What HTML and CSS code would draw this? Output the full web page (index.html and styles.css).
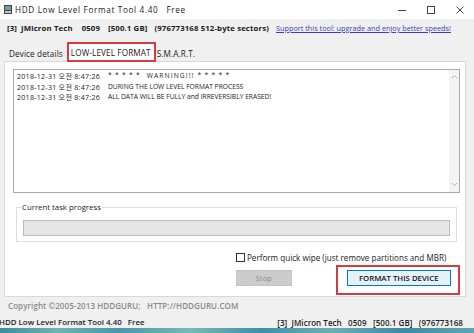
FILE: index.html
```html
<!DOCTYPE html>
<html>
<head>
<meta charset="utf-8">
<link rel="stylesheet" href="styles.css">
</head>
<body>
<div class="window">
  <div class="titlebar">
    <svg class="appicon" width="8" height="9" viewBox="0 0 8 9">
      <rect x="0" y="0" width="8" height="9" fill="#3b4a48"/>
      <rect x="1" y="1" width="6" height="4" fill="#7d9a8e"/>
      <rect x="1" y="6" width="6" height="2" fill="#b8c8c0"/>
    </svg>
    <span class="title">HDD Low Level Format Tool 4.40</span>
    <span class="title free">Free</span>
    <div class="controls">
      <svg width="10" height="10" viewBox="0 0 10 10"><line x1="1" y1="5.5" x2="9" y2="5.5" stroke="#444" stroke-width="1"/></svg>
      <svg width="10" height="10" viewBox="0 0 10 10"><rect x="1.5" y="1.5" width="7" height="7" fill="none" stroke="#444" stroke-width="1"/></svg>
      <svg width="10" height="10" viewBox="0 0 10 10"><path d="M1.5 1.5 L8.5 8.5 M8.5 1.5 L1.5 8.5" stroke="#444" stroke-width="1"/></svg>
    </div>
  </div>

  <div class="info">
    <div class="devinfo">
      <span>[3]</span>
      <span class="g4">JMicron Tech</span>
      <span class="g9">0509</span>
      <span class="g8">[500.1 GB]</span>
      <span class="g7">(976773168 512-byte sectors)</span>
    </div>
    <a class="support" href="#">Support this tool: upgrade and enjoy better speeds!</a>
  </div>

  <div class="tabs">
    <div class="tab first">Device details</div>
    <div class="tab active">LOW-LEVEL FORMAT</div>
    <div class="tab last">S.M.A.R.T.</div>
  </div>

  <div class="panel">
    <div class="log">
      <div class="lines">
        <div class="line"><span class="ts">2018-12-31 오전 8:47:26</span><span class="msg warn"><span class="stars">* * * * *</span><span class="warnword">WARNING!!!</span><span class="stars after">* * * * *</span></span></div>
        <div class="line"><span class="ts">2018-12-31 오전 8:47:26</span><span class="msg">DURING THE LOW LEVEL FORMAT PROCESS</span></div>
        <div class="line"><span class="ts">2018-12-31 오전 8:47:26</span><span class="msg">ALL DATA WILL BE FULLY and IRREVERSIBLY ERASED!</span></div>
      </div>
      <div class="scrollbar">
        <svg width="7" height="5" viewBox="0 0 7 5"><path d="M1 4 L3.5 1.5 L6 4" fill="none" stroke="#b5b5b5" stroke-width="1"/></svg>
        <svg width="7" height="5" viewBox="0 0 7 5"><path d="M1 1 L3.5 3.5 L6 1" fill="none" stroke="#b5b5b5" stroke-width="1"/></svg>
      </div>
    </div>

    <fieldset class="group">
      <legend>Current task progress</legend>
      <div class="progress"></div>
    </fieldset>

    <div class="options">
      <span class="checkbox"></span>
      <span class="optlabel">Perform quick wipe (just remove partitions and MBR)</span>
    </div>

    <div class="actions">
      <div class="btn stop">Stop</div>
      <div class="highlight">
        <div class="btn format">FORMAT THIS DEVICE</div>
      </div>
    </div>
  </div>

  <div class="copyright">Copyright ©2005-2013 HDDGURU;&nbsp;&nbsp; HTTP://HDDGURU.COM</div>

  <div class="statusbar">
    <span class="left">HDD Low Level Format Tool 4.40 &nbsp; Free</span>
    <span class="right">[3]&nbsp; JMicron Tech &nbsp; 0509 &nbsp; [500.1 GB] &nbsp; (976773168</span>
  </div>
  <div class="desktop"></div>
</div>
</body>
</html>
```

FILE: styles.css
```css
* { box-sizing: border-box; }
html, body { margin: 0; padding: 0; }
body {
  width: 474px;
  height: 333px;
  overflow: hidden;
  background: #f0f0f0;
  font-family: "Open Sans", "Noto Sans CJK KR", sans-serif;
  font-size: 7.8px;
  color: #1b1b1b;
}
.window {
  display: flex;
  flex-direction: column;
  width: 474px;
  height: 333px;
}
.titlebar {
  height: 19px;
  background: #ffffff;
  display: flex;
  align-items: center;
  padding-left: 4px;
}
.appicon { margin-right: 3px; }
.title {
  font-size: 8.2px;
  letter-spacing: 0.65px;
  color: #222;
  white-space: nowrap;
}
.free { margin-left: 8px; }
.controls {
  margin-left: auto;
  display: flex;
  gap: 19px;
  padding-right: 9px;
}
.info {
  height: 18px;
  display: flex;
  align-items: center;
  padding-left: 7px;
}
.devinfo {
  width: 262px;
  flex: none;
  display: flex;
  font-weight: 700;
  font-size: 7.8px;
  letter-spacing: 0.13px;
  white-space: nowrap;
  color: #1a1a1a;
}
.g4 { margin-left: 4px; }
.g9 { margin-left: 9px; }
.g8 { margin-left: 8px; }
.g7 { margin-left: 7px; }
.support {
  margin-left: 7px;
  color: #3c3cc4;
  text-decoration: underline;
  white-space: nowrap;
  font-size: 7.3px;
}
.tabs {
  height: 24px;
  display: flex;
  align-items: flex-end;
  padding-left: 5px;
}
.tab {
  height: 17px;
  padding-top: 2px;
  line-height: 15px;
  white-space: nowrap;
  font-size: 8.2px;
  letter-spacing: 0.1px;
  color: #222;
}
.tab.first { padding-left: 4px; padding-right: 4px; }
.tab.last { padding-left: 1px; }
.tab.active {
  height: 20px;
  line-height: 14px;
  background: #fff;
  border: 2px solid #d63a44;
  padding: 2px 3px 0 2px;
  margin-bottom: -1px;
  position: relative;
  z-index: 1;
}
.panel {
  margin: 0 8px 0 4px;
  background: #ffffff;
  border: 1px solid #d8d8d8;
  height: 236px;
  display: flex;
  flex-direction: column;
  padding: 7px 5px 0 8px;
}
.log {
  height: 124px;
  border: 1px solid #a9a9a9;
  display: flex;
  background: #fff;
}
.lines {
  flex: 1;
  padding: 1px 0 0 3px;
}
.line {
  height: 10.6px;
  line-height: 10.6px;
  white-space: nowrap;
  color: #1a1a1a;
  display: flex;
}
.ts {
  width: 91px;
  font-size: 7.1px;
  letter-spacing: 0.25px;
}
.msg { font-size: 6.7px; }
.msg.warn { display: flex; }
.stars { margin-right: 7px; word-spacing: 1.6px; }
.warnword { letter-spacing: 1.1px; }
.stars.after { margin-right: 0; margin-left: 3px; }
.scrollbar {
  width: 10px;
  background: #f3f3f3;
  display: flex;
  flex-direction: column;
  justify-content: space-between;
  align-items: center;
  padding: 4px 0 5px;
}
.group {
  margin: 10px 3px 0 3px;
  border: 1px solid #dedede;
  padding: 8px 6px 5px 6px;
  height: 39px;
}
.group legend {
  padding: 0 1px;
  margin-left: -2px;
  font-size: 7.8px;
  color: #222;
  line-height: 9px;
}
.progress {
  height: 16px;
  background: #e6e6e6;
  border: 1px solid #bcbcbc;
}
.options {
  margin-top: 10px;
  display: flex;
  align-items: center;
  padding-left: 223px;
  height: 11px;
}
.checkbox {
  width: 9px;
  height: 9px;
  border: 1px solid #333;
  background: #fff;
  margin-right: 2px;
  flex: none;
}
.optlabel {
  font-size: 8.1px;
  white-space: nowrap;
  color: #1a1a1a;
}
.actions {
  display: flex;
  align-items: flex-start;
  padding-left: 223px;
  margin-top: 2px;
}
.btn {
  height: 16px;
  line-height: 14px;
  text-align: center;
  font-size: 7.8px;
  white-space: nowrap;
}
.stop {
  margin-top: 5px;
  width: 57px;
  background: #cccccc;
  border: 1px solid #c4c4c4;
  color: #8c8c8c;
}
.highlight {
  margin-left: 44px;
  width: 127px;
  height: 30px;
  border: 2px solid #d63a44;
  padding: 3px 0 0 9px;
}
.format {
  width: 104px;
  background: #e5f1fb;
  border: 1px solid #0078d7;
  color: #111;
  font-weight: 600;
}
.copyright {
  height: 19px;
  line-height: 18px;
  padding-left: 8px;
  color: #8a8a8a;
  font-weight: 600;
  font-size: 8px;
  letter-spacing: 0.08px;
  white-space: nowrap;
}
.statusbar {
  height: 12px;
  display: flex;
  align-items: center;
  font-weight: 600;
  white-space: nowrap;
  color: #1e1e1e;
}
.statusbar .left { font-size: 7.9px; margin-left: -1px; }
.statusbar .right { margin-left: auto; margin-right: 11px; font-size: 8px; letter-spacing: 0.05px; }
.desktop {
  flex: 1;
  background: linear-gradient(90deg, #3d8d98 0%, #6fb3b4 12%, #4a97a8 25%, #79b9b8 40%, #3f8fa3 55%, #6cb0b6 70%, #3e8aa0 85%, #5fa8b0 100%);
}
```
